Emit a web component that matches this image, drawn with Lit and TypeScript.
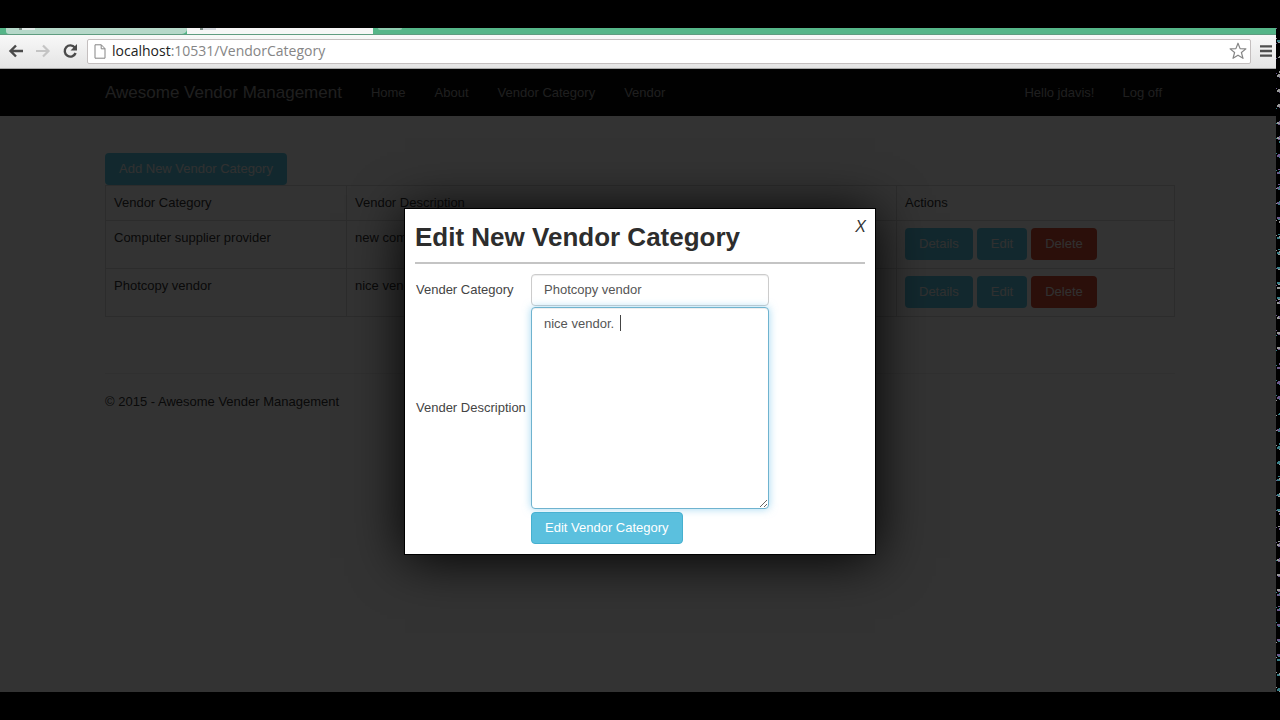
import { LitElement, html, css, svg } from "lit";
import { customElement, state } from "lit/decorators.js";

interface VendorCategory {
  name: string;
  description: string;
}

@customElement("browser-bar")
export class BrowserBar extends LitElement {
  static styles = css`
    :host {
      display: block;
      font-family: "Open Sans", "Noto Sans", sans-serif;
    }
    .tabs {
      display: flex;
      height: 7px;
      box-sizing: border-box;
      background: #55b588;
      border-bottom: 1px solid #5f9c80;
      overflow: hidden;
    }
    .tab-edge {
      width: 6px;
    }
    .tab {
      width: 181px;
      background: #b5d8c9;
      border-radius: 0 0 5px 3px;
    }
    .tab.active {
      flex: none;
      width: 186px;
      height: 7px;
      background: #f6f6f6;
      border-radius: 0;
    }
    .tab-icon {
      display: block;
      width: 13px;
      height: 2px;
      margin-left: 13px;
      background: #dfe9e6;
      border-left: 3px solid #7e8f88;
    }
    .active .tab-icon {
      background: #d4d8dd;
    }
    .new-tab {
      width: 24px;
      height: 2px;
      margin-left: 5px;
      background: #8fcdb0;
      border-radius: 0 0 3px 3px;
    }
    .toolbar {
      display: flex;
      align-items: center;
      height: 34px;
      box-sizing: border-box;
      padding: 0 8px 1px 8px;
      background: linear-gradient(#f8f8f8, #e4e4e4);
      border-bottom: 1px solid #a8a8a8;
    }
    button {
      display: block;
      padding: 0;
      border: 0;
      background: none;
    }
    svg {
      display: block;
    }
    .nav {
      display: flex;
      gap: 11px;
      margin-right: 9px;
    }
    .address {
      display: flex;
      flex: 1;
      align-items: center;
      gap: 6px;
      height: 25px;
      box-sizing: border-box;
      padding: 0 3px 0 6px;
      background: #fff;
      border: 1px solid #c4bfbf;
      border-radius: 2px;
      margin-right: 9px;
    }
    .url {
      flex: 1;
      font-size: 14px;
      line-height: 20px;
      color: #858585;
      text-decoration: none;
    }
    .host {
      color: #222;
    }
  `;

  render() {
    return html`
      <div class="tabs">
        <span class="tab-edge"></span>
        <span class="tab"><i class="tab-icon"></i></span>
        <span class="tab active"><i class="tab-icon"></i></span>
        <span class="new-tab"></span>
      </div>
      <div class="toolbar">
        <div class="nav">
          <button aria-label="Back">
            <svg width="16" height="16" viewBox="0 0 16 16" fill="none" stroke="#4a4a4a" stroke-width="2.4"><path d="M15 8H3M8 2.5 2.5 8 8 13.5" /></svg>
          </button>
          <button aria-label="Forward">
            <svg width="16" height="16" viewBox="0 0 16 16" fill="none" stroke="#c4c4c4" stroke-width="2.2"><path d="M1 8H13M8 2.5 13.5 8 8 13.5" /></svg>
          </button>
          <button aria-label="Reload">
            <svg width="16" height="16" viewBox="0 0 16 16"><path d="M12.8 4.6A5.6 5.6 0 1 0 13.6 10" fill="none" stroke="#4a4a4a" stroke-width="2.4" /><path d="M15 1v6.5H8.5z" fill="#4a4a4a" /></svg>
          </button>
        </div>
        <div class="address">
          <svg width="12" height="15" viewBox="0 0 12 15" fill="none" stroke="#858585"><path d="M1 .8h6.3L11 4.6v9.6H1zM7.2.8v4H11" /></svg>
          <a class="url" href="#"><span class="host">localhost</span>:10531/VendorCategory</a>
          <button aria-label="Bookmark">
            <svg width="18" height="18" viewBox="0 0 18 18" fill="#fff" stroke="#858585" stroke-width="1.2" stroke-linejoin="round"><path d="M9 1.2l2.1 5.4 5.8.3-4.5 3.6 1.6 5.8L9 13.2l-5 3.1 1.6-5.8L1.1 6.9l5.8-.3z" /></svg>
          </button>
        </div>
        <button aria-label="Menu">
          <svg width="12" height="14" viewBox="0 0 12 14" stroke="#4e4e4e" stroke-width="2.4"><path d="M0 2.4h12M0 7h12M0 11.6h12" /></svg>
        </button>
      </div>
    `;
  }
}

@customElement("edit-dialog")
export class EditDialog extends LitElement {
  static styles = css`
    :host {
      display: block;
      position: relative;
      width: 470px;
      box-sizing: border-box;
      padding: 10px;
      background: #fff;
      color: #444;
      font-size: 13px;
      line-height: 20px;
      box-shadow: 0 0 0 1px #000, 0 4px 50px #000;
    }
    h2 {
      margin: 0;
      font-size: 26px;
      line-height: 36px;
      color: #2d2d2d;
    }
    hr {
      height: 2px;
      margin: 7px 0 10px;
      border: 0;
      background: #c4c4c4;
    }
    .close {
      position: absolute;
      top: 8px;
      right: 9px;
      padding: 0;
      border: 0;
      background: none;
      color: #333;
      font: italic 16px/20px "Liberation Sans", Arial, sans-serif;
    }
    .form {
      display: grid;
      grid-template-columns: 115px 238px;
      align-items: center;
      row-gap: 1px;
      padding-left: 1px;
    }
    input,
    textarea {
      display: block;
      width: 100%;
      box-sizing: border-box;
      margin: 0;
      padding: 6px 12px;
      border: 1px solid #ccc;
      border-radius: 4px;
      outline: 0;
      background: #fff;
      color: #555;
      font: inherit;
      box-shadow: inset 0 1px 1px rgba(0, 0, 0, 0.075);
    }
    input {
      height: 32px;
      padding: 4px 12px 6px;
    }
    textarea {
      height: 202px;
      border-color: #6fb3cf;
      box-shadow: inset 0 1px 1px rgba(0, 0, 0, 0.075), 0 0 8px rgba(102, 190, 233, 0.6);
    }
    .field {
      position: relative;
    }
    .caret {
      position: absolute;
      top: 8px;
      left: 89px;
      width: 1px;
      height: 16px;
      background: #444;
    }
    .submit {
      grid-column: 2;
      justify-self: start;
      height: 32px;
      margin-top: 2px;
      padding: 0 13px;
      border: 1px solid #46b0cf;
      border-radius: 4px;
      background: #5bc0de;
      color: #fff;
      font: inherit;
    }
  `;

  render() {
    return html`
      <h2>Edit New Vendor Category</h2>
      <button class="close" aria-label="Close">X</button>
      <hr />
      <form class="form" @submit=${(e: Event) => e.preventDefault()}>
        <label for="category">Vender Category</label>
        <input id="category" type="text" .value=${"Photcopy vendor"} />
        <label for="description">Vender Description</label>
        <div class="field">
          <textarea id="description" .value=${"nice vendor. "}></textarea>
          <span class="caret"></span>
        </div>
        <button class="submit">Edit Vendor Category</button>
      </form>
    `;
  }
}

@customElement("app-root")
export class AppRoot extends LitElement {
  @state() private rows: VendorCategory[] = [
    { name: "Computer supplier provider", description: "new computer supplier" },
    { name: "Photcopy vendor", description: "nice vendor." },
  ];

  static styles = css`
    :host {
      display: flex;
      flex-direction: column;
      position: relative;
      min-height: 100vh;
      box-sizing: border-box;
      padding: 28px 0;
      background: #000;
      font-family: "Liberation Sans", Arial, sans-serif;
      font-size: 13px;
      line-height: 20px;
      overflow: hidden;
    }
    .page {
      flex: 1;
      position: relative;
      background: #fff;
      color: #333;
    }
    .container {
      max-width: 1070px;
      margin: 0 auto;
    }
    .navbar {
      background: #080808;
    }
    .navbar .container {
      display: flex;
      align-items: center;
      gap: 29px;
      height: 47px;
    }
    .navbar a {
      color: #999;
      text-decoration: none;
    }
    .navbar .brand {
      font-size: 17px;
    }
    .user {
      display: flex;
      gap: 28px;
      margin-left: auto;
      padding-right: 13px;
    }
    .content {
      padding-top: 37px;
    }
    .btn {
      height: 32px;
      padding: 0 14px;
      border: 0;
      border-radius: 4px;
      background: #5bc8e4;
      color: #f0f0f0;
      font: inherit;
    }
    .danger {
      background: #d84a32;
    }
    table {
      width: 100%;
      table-layout: fixed;
      border-collapse: collapse;
      margin-bottom: 56px;
    }
    td,
    th {
      height: 34px;
      box-sizing: border-box;
      padding: 7px 8px;
      border: 1px solid #ddd;
      font-weight: normal;
      text-align: left;
      vertical-align: top;
    }
    td {
      height: 48px;
    }
    .col-name {
      width: 241px;
    }
    .col-actions {
      width: 278px;
    }
    .actions {
      display: flex;
      gap: 4px;
    }
    hr {
      margin: 0 0 18px;
      border: 0;
      border-top: 1px solid #eee;
    }
    footer p {
      margin: 0;
    }
    .overlay {
      position: absolute;
      inset: 0;
      display: flex;
      justify-content: center;
      align-items: flex-start;
      padding-top: 140px;
      background: rgba(0, 0, 0, 0.8);
      overflow: hidden;
    }
    .edge {
      position: absolute;
      top: 28px;
      right: 0;
      bottom: 28px;
      width: 4px;
      background: #000;
    }
  `;

  private renderEdge() {
    const colors = ["#6b5a8c", "#4d8060", "#999", "#8b5a66", "#387f88", "#7d7048"];
    const marks = Array.from({ length: 170 }, (_, i) => {
      const y = (i * 37 + (i % 7) * 11) % 664;
      return svg`<rect x=${(i * 3) % 4} y=${y} width=${1 + (i % 4)} height=${1 + (i % 2)} fill=${colors[(i * 5 + (i % 4)) % 6]} />`;
    });
    return html`<svg class="edge" width="4" height="100%" shape-rendering="crispEdges" aria-hidden="true">${marks}</svg>`;
  }

  render() {
    return html`
      <browser-bar></browser-bar>
      <div class="page">
        <nav class="navbar">
          <div class="container">
            <a class="brand" href="#">Awesome Vendor Management</a>
            <a href="#">Home</a>
            <a href="#">About</a>
            <a href="#">Vendor Category</a>
            <a href="#">Vendor</a>
            <div class="user"><a href="#">Hello jdavis!</a><a href="#">Log off</a></div>
          </div>
        </nav>
        <main class="container content">
          <button class="btn">Add New Vendor Category</button>
          <table>
            <thead>
              <tr>
                <th class="col-name">Vendor Category</th>
                <th>Vendor Description</th>
                <th class="col-actions">Actions</th>
              </tr>
            </thead>
            <tbody>
              ${this.rows.map(
                (row) => html`<tr>
                  <td>${row.name}</td>
                  <td>${row.description}</td>
                  <td>
                    <div class="actions">
                      <button class="btn">Details</button>
                      <button class="btn">Edit</button>
                      <button class="btn danger">Delete</button>
                    </div>
                  </td>
                </tr>`
              )}
            </tbody>
          </table>
          <hr />
          <footer><p>© 2015 - Awesome Vender Management</p></footer>
        </main>
        <div class="overlay"><edit-dialog role="dialog" aria-label="Edit New Vendor Category"></edit-dialog></div>
      </div>
      ${this.renderEdge()}
    `;
  }
}
